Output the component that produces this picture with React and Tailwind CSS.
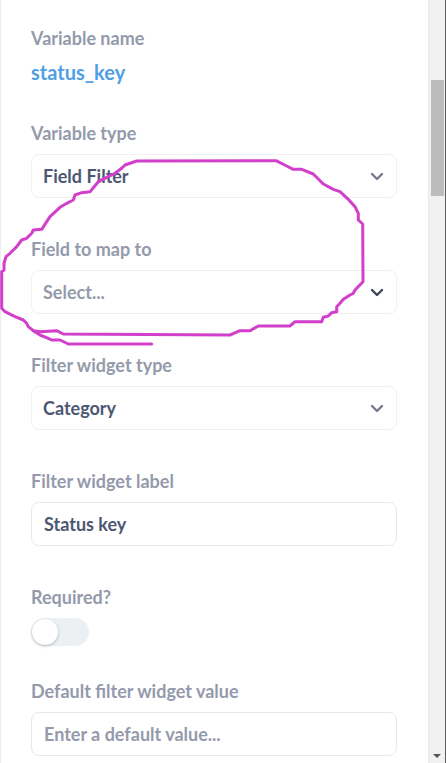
import React from "react";

const Chevron = ({ dark }) => (
  <svg width="14" height="9" viewBox="0 0 14 9" className="shrink-0">
    <polyline
      points="2,2 7,7 12,2"
      fill="none"
      stroke={dark ? "#3f4656" : "#737b8b"}
      strokeWidth="2.4"
      strokeLinecap="round"
      strokeLinejoin="round"
    />
  </svg>
);

const Label = ({ children, className = "" }) => (
  <div className={`h-5 leading-5 text-[18px] font-bold text-[#949aab] ${className}`}>
    {children}
  </div>
);

const SelectBox = ({ value, placeholder, dark }) => (
  <div className="mt-[11px] h-[44px] rounded-lg border border-[#f0f0f0] bg-white flex items-center justify-between pl-[11px] pr-[12px]">
    <span
      className={`text-[18px] font-bold ${
        value ? "text-[#4c5773]" : "text-[#949aab]"
      }`}
    >
      {value || placeholder}
    </span>
    <Chevron dark={dark} />
  </div>
);

const TextBox = ({ value, placeholder }) => (
  <div className="mt-[11px] h-[44px] rounded-lg border border-[#e6e8ea] bg-white flex items-center pl-[12px]">
    <span
      className={`text-[18px] font-bold ${
        value ? "text-[#4c5773]" : "text-[#949aab]"
      }`}
    >
      {value || placeholder}
    </span>
  </div>
);

const Scribble = () => (
  <svg
    className="absolute inset-0 pointer-events-none"
    width="446"
    height="763"
    viewBox="0 0 446 763"
  >
    <g
      fill="none"
      stroke="#d23fca"
      strokeWidth="3"
      strokeLinejoin="round"
      strokeLinecap="round"
    >
      <path d="M136.7,161 L276,160.7 L286.7,166 L293.3,169.3 L301.7,169.3 L313.3,174 L323.3,184 L333.3,189.3 L340,191.7 L348.3,199.3 L355,206.7 L358.3,213.3 L358.3,220 L362.7,224 L363,281.7 L355,290 L353.3,293.3 L350,295 L343.3,299.3 L340,303.3 L336.7,306.7 L336.7,311.7 L331.7,312.7 L328.3,316 L323.3,317.3 L321.7,321.7 L295,321.7 L290,326 L258.3,326 L250,330.7 L240,330.7 L230,335 L63.3,334 L56.7,330.7 L40,331.7 L33.3,330.7 L28.3,326.7 L26.7,323.3 L23.3,320 L15,316.7 L5,311.7 L1.7,308.3 L1.7,271.7 L4,270 L4,263.3 L6,256.7 L10,253.3 L13.3,250 L16.7,246.7 L21.7,240 L26.7,238.3 L31.7,233.3 L33.3,230 L41.7,229.3 L50,216.7 L60,207.3 L66.7,203.3 L73.3,200 L75,195 L81.7,192.7 L90,191.7 L98.3,181.7 L106.7,177.3 L115,173.3 L121.7,168.3 L125,165 Z" />
      <path d="M33.3,330.7 L40,335 L48.3,338.3 L51.7,340 L60,340 L68.3,344 L151.7,344" />
    </g>
  </svg>
);

export default function App() {
  return (
    <div
      className="relative w-[446px] h-[763px] overflow-hidden bg-white flex"
      style={{ fontFamily: "Lato, 'Noto Sans', sans-serif" }}
    >
      {/* sidebar content */}
      <div className="flex-1 border-l border-[#ececec] pl-[30px] pr-[31px] pt-[28px]">
        <Label>Variable name</Label>
        <div className="mt-[12px] h-6 leading-6 text-[20px] font-bold text-[#509ee3]">
          status_key
        </div>

        <Label className="mt-[39px]">Variable type</Label>
        <SelectBox value="Field Filter" />

        <Label className="mt-[41px]">Field to map to</Label>
        <SelectBox placeholder="Select..." dark />

        <Label className="mt-[41px]">Filter widget type</Label>
        <SelectBox value="Category" />

        <Label className="mt-[41px]">Filter widget label</Label>
        <TextBox value="Status key" />

        <Label className="mt-[41px]">Required?</Label>
        <div className="mt-[11px] w-[58px] h-[28px] rounded-full bg-[#edf0f2] flex items-center pl-[1px]">
          <div className="w-[26px] h-[26px] rounded-full bg-white shadow-[0_1px_3px_rgba(0,0,0,0.25)]" />
        </div>

        <Label className="mt-[35px]">Default filter widget value</Label>
        <TextBox placeholder="Enter a default value..." />
      </div>

      {/* scrollbar */}
      <div className="w-[17px] h-full bg-[#f1f1f1] border-l border-[#e8e8e8] flex flex-col items-center pt-[80px] relative">
        <div className="w-[13px] h-[116px] bg-[#bcbcbc]" />
        <div className="absolute bottom-[5px] left-[4px] w-0 h-0 border-l-[4px] border-r-[4px] border-t-[4px] border-l-transparent border-r-transparent border-t-[#555]" />
      </div>
      <div className="w-px h-full bg-[#5a5a5a]" />

      <Scribble />
    </div>
  );
}
